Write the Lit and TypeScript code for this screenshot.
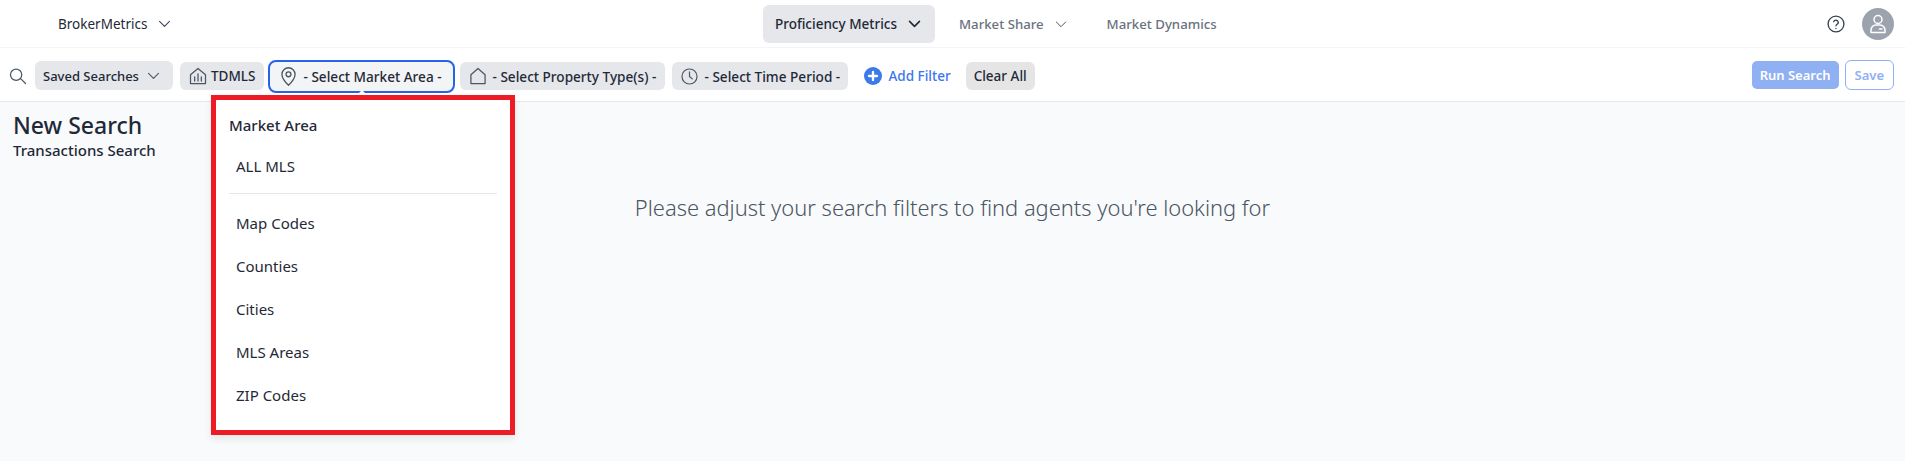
import { LitElement, html, css, svg } from "lit";
import { customElement } from "lit/decorators.js";

const icon = (body: unknown, size = 16, sw = 1.5) => html`<svg
    width=${size}
    height=${size}
    viewBox="0 0 24 24"
    fill="none"
    stroke="currentColor"
    stroke-width=${sw}
    stroke-linecap="round"
    stroke-linejoin="round"
>
    ${body}
</svg>`;

const chevron = svg`<path d="M5 9l7 7 7-7" />`;
const search = svg`<path d="M21 21l-5.2-5.2M16.5 10.5a6.75 6.75 0 1 1-13.5 0 6.75 6.75 0 0 1 13.5 0z" />`;
const bank = svg`<path d="M3 10.5L12 3l9 7.5V21H3z" /><path d="M8 18v-5M12 18V9.5M16 18v-5" />`;
const pin = svg`<path d="M12 22s-7.5-7-7.5-12.5a7.5 7.5 0 0 1 15 0C19.5 15 12 22 12 22z" /><circle cx="12" cy="9.5" r="2.8" />`;
const house = svg`<path d="M3.5 21V10.5L12 3l8.5 7.5V21z" />`;
const clock = svg`<circle cx="12" cy="12" r="9.5" /><path d="M12 6v6l3.5 3" />`;
const help = svg`<circle cx="12" cy="12" r="9.5" /><path d="M9.2 9.3a2.9 2.9 0 0 1 5.6.9c0 1.9-2.8 2.3-2.8 4" /><path d="M12 17.4v.1" />`;

@customElement("app-root")
export class AppRoot extends LitElement {
    static styles = css`
        :host {
            display: flex;
            flex-direction: column;
            position: relative;
            min-height: 100vh;
            font-family: "Noto Sans", "Open Sans", sans-serif;
            font-size: 13.5px;
            color: #1f2937;
            background: #f9fafb;
        }

        svg {
            display: block;
            flex: none;
        }

        .topbar {
            display: grid;
            grid-template-columns: 763px auto 1fr;
            align-items: center;
            height: 47px;
            background: #fff;
            border-bottom: 1px solid #f3f4f6;
        }

        .brand {
            display: flex;
            align-items: center;
            gap: 9px;
            padding-left: 58px;
        }

        .brand svg {
            color: #374151;
        }

        .tabs {
            display: flex;
            align-items: center;
            gap: 12px;
        }

        .tab {
            display: flex;
            align-items: center;
            gap: 9px;
            height: 38px;
            padding: 0 14px 0 12px;
            border-radius: 6px;
            font-size: 13.2px;
            font-weight: 500;
            color: #6b7280;
        }

        .tab svg {
            color: #4b5563;
        }

        .tab.active {
            padding-right: 12px;
            background: #e5e7eb;
            color: #1f2937;
            font-size: 13.5px;
        }

        .tab.active svg {
            color: #1f2937;
        }

        .account {
            display: flex;
            justify-content: flex-end;
            align-items: center;
            gap: 16px;
            padding-right: 11px;
        }

        .help {
            color: #374151;
        }

        .avatar {
            display: flex;
            align-items: center;
            justify-content: center;
            width: 32px;
            height: 32px;
            border-radius: 50%;
            background: #9ca3af;
            color: #fff;
        }

        .filters {
            display: flex;
            align-items: center;
            height: 50px;
            padding: 3px 11px 0 8px;
            background: #fff;
            border-bottom: 1px solid #e5e7eb;
        }

        .search {
            margin-right: 7px;
            color: #4b5563;
        }

        .chip {
            display: flex;
            align-items: center;
            height: 28px;
            padding: 0 9px 0 8px;
            border-radius: 6px;
            background: #e5e7eb;
            font-size: 13.6px;
            font-weight: 500;
            white-space: nowrap;
        }

        .chip svg {
            color: #4b5563;
        }

        .chip.saved {
            width: 138px;
            height: 29px;
            margin-top: -1px;
            box-sizing: border-box;
            gap: 6px;
            font-size: 13px;
            margin-right: 7px;
        }

        .chip.tdmls {
            gap: 3px;
            font-size: 13.5px;
            margin-right: 4px;
        }

        .chip.open {
            position: relative;
            gap: 4px;
            height: 33px;
            width: 187px;
            padding: 0 0 0 8px;
            margin-right: 5px;
            border: 2px solid #2563eb;
            border-radius: 8px;
            box-sizing: border-box;
            background: #f3f4f6;
        }

        /* small notch where the menu attaches */
        .chip.open::after {
            content: "";
            position: absolute;
            left: 50%;
            bottom: -2px;
            margin-left: -3px;
            border: 3px solid transparent;
            border-top: 0;
            border-bottom-color: #fff;
        }

        .chip.property {
            gap: 4px;
            margin-right: 7px;
            width: 205px;
            box-sizing: border-box;
        }

        .chip.period {
            gap: 5px;
            width: 176px;
            box-sizing: border-box;
        }

        .add {
            display: flex;
            align-items: center;
            gap: 6px;
            margin: 0 15px 0 16px;
            font-weight: 500;
            color: #3b76ef;
        }

        .plus {
            display: flex;
            align-items: center;
            justify-content: center;
            width: 18px;
            height: 18px;
            border-radius: 50%;
            background: #3b7ae8;
            color: #fff;
        }

        .clear {
            display: flex;
            align-items: center;
            height: 28px;
            padding: 0 8px;
            border-radius: 6px;
            background: #e5e5e5;
            font-weight: 500;
        }

        .actions {
            display: flex;
            align-items: center;
            gap: 6px;
            margin: -2px 0 0 auto;
            font-size: 13px;
            font-weight: 600;
        }

        .run {
            display: flex;
            align-items: center;
            height: 28px;
            padding: 0 8px;
            border-radius: 5px;
            background: #8fb0f3;
            color: #fff;
        }

        .save {
            display: flex;
            align-items: center;
            height: 28px;
            padding: 0 9px;
            border: 1px solid #8fb0f3;
            border-radius: 6px;
            background: #fff;
            color: #8fb0f3;
        }

        .main {
            flex: 1;
            display: grid;
            grid-template-columns: 1fr auto 1fr;
        }

        .title {
            padding: 8px 13px;
        }

        h1 {
            margin: 0;
            font-size: 23px;
            line-height: 31px;
            font-weight: 500;
        }

        h2 {
            margin: 0;
            font-size: 15px;
            line-height: 18px;
            font-weight: 500;
        }

        .empty {
            margin: 0;
            padding-top: 91px;
            font-size: 21.9px;
            line-height: 30px;
            font-weight: 300;
            color: #4b5563;
        }

        .menu {
            position: absolute;
            left: 211px;
            top: 95px;
            width: 304px;
            height: 340px;
            box-sizing: border-box;
            border: 5px solid #ed1c24;
            background: #fff;
            box-shadow: 0 4px 8px rgba(0, 0, 0, 0.08);
            padding: 15px 13px 0;
        }

        .menu h3 {
            margin: 0 0 10px;
            font-size: 15px;
            line-height: 20px;
            font-weight: 500;
        }

        .item {
            padding-left: 7px;
            font-size: 15px;
            line-height: 43px;
        }

        hr {
            margin: 5px 0 8px;
            border: 0;
            border-top: 1px solid #e5e7eb;
        }
    `;

    render() {
        return html`
            <div class="topbar">
                <div class="brand">
                    <span>BrokerMetrics</span>
                    ${icon(chevron, 17)}
                </div>
                <nav class="tabs">
                    <div class="tab active">Proficiency Metrics ${icon(chevron, 17, 2.2)}</div>
                    <div class="tab">Market Share ${icon(chevron, 16)}</div>
                    <div class="tab">Market Dynamics</div>
                </nav>
                <div class="account">
                    <span class="help">${icon(help, 20, 1.6)}</span>
                    <span class="avatar"
                        >${icon(
                            svg`<circle cx="12" cy="7.5" r="4" /><path d="M5 20.5v-2.5a5 5 0 0 1 5-5h4a5 5 0 0 1 5 5v2.5z" /><path d="M13.5 17h2.5" />`,
                            24,
                            1.5
                        )}</span
                    >
                </div>
            </div>
            <div class="filters">
                <span class="search">${icon(search, 20)}</span>
                <div class="chip saved">Saved Searches ${icon(chevron, 17)}</div>
                <div class="chip tdmls">${icon(bank, 20)} TDMLS</div>
                <div class="chip open">${icon(pin, 21)} - Select Market Area -</div>
                <div class="chip property">${icon(house, 20)} - Select Property Type(s) -</div>
                <div class="chip period">${icon(clock, 19)} - Select Time Period -</div>
                <div class="add">
                    <span class="plus">${icon(svg`<path d="M12 6v12M6 12h12" />`, 16, 3.5)}</span>
                    Add Filter
                </div>
                <div class="clear">Clear All</div>
                <div class="actions">
                    <div class="run">Run Search</div>
                    <div class="save">Save</div>
                </div>
            </div>
            <div class="main">
                <div class="title">
                    <h1>New Search</h1>
                    <h2>Transactions Search</h2>
                </div>
                <p class="empty">Please adjust your search filters to find agents you're looking for</p>
            </div>
            <div class="menu">
                <h3>Market Area</h3>
                <div class="item">ALL MLS</div>
                <hr />
                ${["Map Codes", "Counties", "Cities", "MLS Areas", "ZIP Codes"].map(
                    (name) => html`<div class="item">${name}</div>`
                )}
            </div>
        `;
    }
}
